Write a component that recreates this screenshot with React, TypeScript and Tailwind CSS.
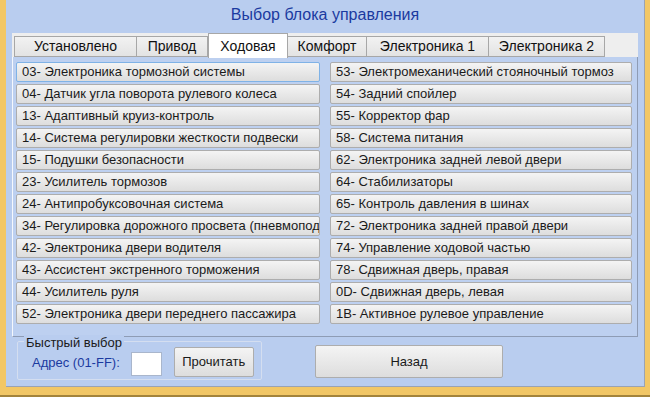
import React from "react";

const left = [
  "03- Электроника тормозной системы",
  "04- Датчик угла поворота рулевого колеса",
  "13- Адаптивный круиз-контроль",
  "14- Система регулировки жесткости подвески",
  "15- Подушки безопасности",
  "23- Усилитель тормозов",
  "24- Антипробуксовочная система",
  "34- Регулировка дорожного просвета (пневмоподвеска)",
  "42- Электроника двери водителя",
  "43- Ассистент экстренного торможения",
  "44- Усилитель руля",
  "52- Электроника двери переднего пассажира",
];

const right = [
  "53- Электромеханический стояночный тормоз",
  "54- Задний спойлер",
  "55- Корректор фар",
  "58- Система питания",
  "62- Электроника задней левой двери",
  "64- Стабилизаторы",
  "65- Контроль давления в шинах",
  "72- Электроника задней правой двери",
  "74- Управление ходовой частью",
  "78- Сдвижная дверь, правая",
  "0D- Сдвижная дверь, левая",
  "1B- Активное рулевое управление",
];

const tabs = [
  { t: "Установлено", w: "w-[123px]" },
  { t: "Привод", w: "w-[71px]" },
  { t: "Ходовая", w: "w-[80px]", active: true },
  { t: "Комфорт", w: "w-[79px]" },
  { t: "Электроника 1", w: "w-[122px]" },
  { t: "Электроника 2", w: "w-[116px]" },
];

function Btn({ t, focus }: { t: string; focus?: boolean }) {
  return (
    <div
      className={`h-[20px] overflow-hidden whitespace-nowrap rounded-[2px] border bg-gradient-to-b from-[#f4f4f4] to-[#dddddd] pl-[5px] text-[13px] leading-[18px] text-[#1a1a1a] ${
        focus ? "border-[#7fb2e6]" : "border-[#adadad]"
      }`}
    >
      {t}
    </div>
  );
}

export default function App() {
  return (
    <div
      className="flex h-[397px] w-[650px] flex-col border-b-2 border-[#a3843c] bg-[#f2c766] pb-[8px] pl-[6px] pr-[5px]"
      style={{ fontFamily: '"Liberation Sans", Arial, sans-serif' }}
    >
      <div className="flex flex-1 flex-col border-b border-r border-[#9aa3b4] bg-[#b9cdef]">
        <div className="flex h-[33px] items-center justify-center pb-[4px] text-[16px] text-[#1b3aa0]">
          Выбор блока управления
        </div>
        <div className="ml-[6px] mr-[6px] flex h-[304px] flex-col">
          <div className="flex h-[24px] items-end bg-[#eeeeee] pl-[2px]">
            {tabs.map((tb, i) =>
              tb.active ? (
                <div
                  key={i}
                  className={`${tb.w} relative z-10 -mb-[1px] flex h-[25px] items-center justify-center border border-b-0 border-[#a7a7a7] bg-white text-[14px] text-[#111]`}
                >
                  {tb.t}
                </div>
              ) : (
                <div
                  key={i}
                  className={`${tb.w} flex h-[21px] items-center justify-center border border-l-0 border-[#a7a7a7] bg-gradient-to-b from-[#f2f2f2] to-[#e3e3e3] text-[14px] text-[#111] first:border-l`}
                >
                  {tb.t}
                </div>
              )
            )}
          </div>
          <div className="flex flex-1 gap-[10px] border border-t-0 border-l-[#f5f8fd] border-r-[#8e9cb5] border-b-[#8e9cb5] bg-[#bdd0f0] px-[3px] pt-[5px]">
            <div className="flex w-[304px] flex-col gap-[2px]">
              {left.map((t, i) => (
                <Btn key={i} t={t} focus={i === 0} />
              ))}
            </div>
            <div className="flex w-[302px] flex-col gap-[2px]">
              {right.map((t, i) => (
                <Btn key={i} t={t} />
              ))}
            </div>
          </div>
        </div>
        <div className="flex items-start">
          <div className="relative ml-[11px] mt-[4px] flex h-[39px] w-[245px] items-start rounded-[2px] border border-[#d4def0] pl-[14px]">
            <span className="absolute -top-[7px] left-[6px] bg-[#b9cdef] px-[2px] text-[13px] leading-[16px] text-[#1a1a1a]">
              Быстрый выбор
            </span>
            <span className="mt-[12px] text-[13px] leading-[18px] text-[#1b3aa0]">Адрес (01-FF):</span>
            <div className="ml-[11px] mt-[10px] h-[24px] w-[31px] border border-[#a9b6cc] bg-white" />
            <div className="ml-[12px] mt-[5px] flex h-[30px] w-[80px] items-center justify-center rounded-[2px] border border-[#adadad] bg-gradient-to-b from-[#f4f4f4] to-[#dddddd] text-[13px] text-[#1a1a1a]">
              Прочитать
            </div>
          </div>
          <div className="ml-[53px] mt-[8px] flex h-[33px] w-[188px] items-center justify-center rounded-[2px] border border-[#adadad] bg-gradient-to-b from-[#f4f4f4] to-[#dddddd] text-[13px] text-[#1a1a1a]">
            Назад
          </div>
        </div>
      </div>
    </div>
  );
}
